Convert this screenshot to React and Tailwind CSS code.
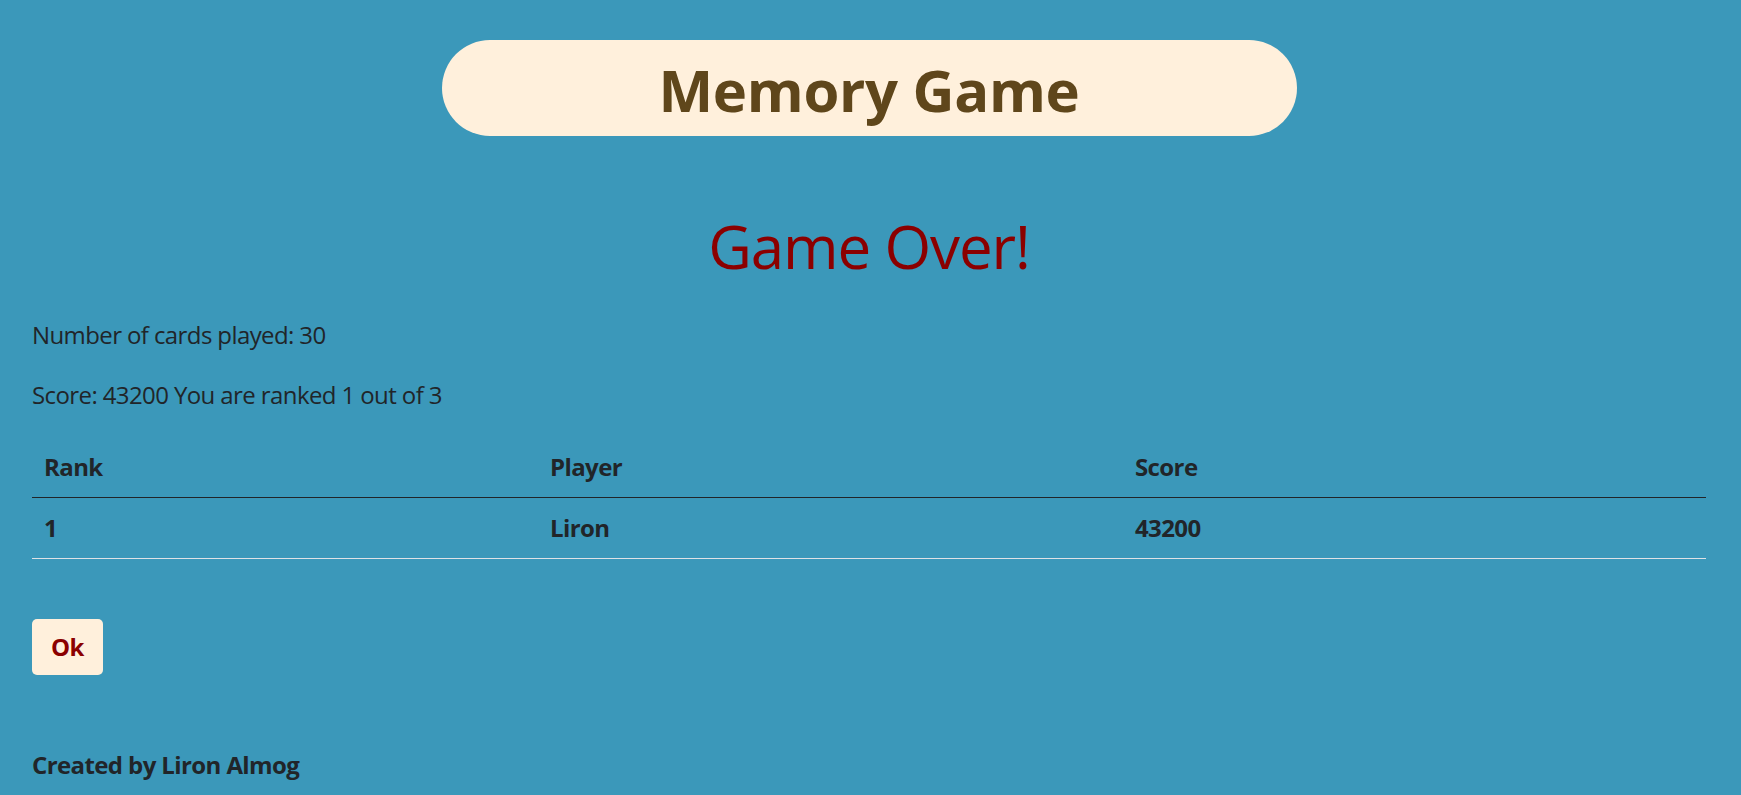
const scores = [{ rank: 1, player: 'Liron', score: 43200 }]

function Header() {
  return (
    <div className="pt-10">
      <div className="mx-auto flex h-[96px] w-[855px] items-center justify-center rounded-full bg-[#fff0dc]">
        <h1 className="pt-[3px] text-[58px] font-bold leading-none tracking-[-0.3px] text-[#5f461b]">Memory Game</h1>
      </div>
    </div>
  )
}

function ScoreTable() {
  return (
    <table className="mb-[60px] w-full border-collapse text-left">
      <thead>
        <tr className="border-b border-[#212529]">
          <th className="w-[506px] px-3 py-3 font-bold">Rank</th>
          <th className="w-[585px] px-3 py-3 font-bold">Player</th>
          <th className="px-3 py-3 font-bold">Score</th>
        </tr>
      </thead>
      <tbody>
        {scores.map((row) => (
          <tr key={row.rank} className="border-b border-[#dee2e6]">
            <td className="px-3 py-3 font-bold">{row.rank}</td>
            <td className="px-3 py-3 font-bold">{row.player}</td>
            <td className="px-3 py-3 font-bold">{row.score}</td>
          </tr>
        ))}
      </tbody>
    </table>
  )
}

export default function App() {
  return (
    <div
      className="min-h-screen bg-[#3b98ba] pl-8 pr-[35px] text-[24px] leading-[36px] tracking-[-0.6px] text-[#212529]"
      style={{ fontFamily: '"Open Sans", "Noto Sans", sans-serif' }}
    >
      <Header />

      <h2 className="mt-[74px] mb-[35px] text-center text-[60px] leading-[72px] font-normal tracking-[-1.1px] text-[#8b0000]">
        Game Over!
      </h2>

      <p className="mb-6">Number of cards played: 30</p>
      <p className="mb-6">Score: 43200 You are ranked 1 out of 3</p>

      <ScoreTable />

      <button className="rounded-[5px] bg-[#fff0dc] px-[19px] py-[10px] font-bold text-[#8b0000]">
        Ok
      </button>

      <footer className="mt-[72px] font-bold">Created by Liron Almog</footer>
    </div>
  )
}
